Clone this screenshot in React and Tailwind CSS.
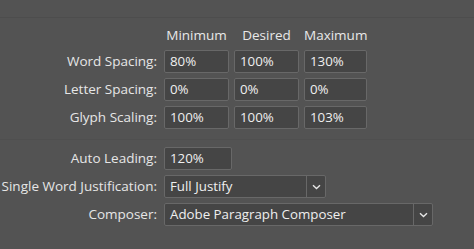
import React from 'react';

const font = { fontFamily: '"Open Sans", "Liberation Sans", sans-serif' };

const Field = ({ value, width = 'w-[65px]', height = 'h-[23px]' }) => (
  <div
    className={`${width} ${height} flex items-center rounded-[2px] border border-[#686868] bg-[#454545] pl-[5px] text-[13.3px] text-[#efefef]`}
  >
    {value}
  </div>
);

const Chevron = () => (
  <svg width="9" height="6" viewBox="0 0 9 6" fill="none">
    <path d="M1 1.2L4.5 4.5L8 1.2" stroke="#e6e6e6" strokeWidth="1.4" />
  </svg>
);

const Select = ({ value, width }) => (
  <div
    className={`${width} h-[23px] flex rounded-[2px] border border-[#686868] bg-[#454545] text-[13.3px] text-[#efefef]`}
  >
    <div className="flex-1 flex items-center pl-[5px]">{value}</div>
    <div className="w-[19px] flex items-center justify-center border-l border-[#686868]">
      <Chevron />
    </div>
  </div>
);

const Row = ({ label, children }) => (
  <div className="flex items-center">
    <div className="w-[157px] text-right text-[13.5px] whitespace-nowrap text-[#e6e6e6]">{label}</div>
    <div className="ml-[7px] flex gap-[5px]">{children}</div>
  </div>
);

export default function App() {
  const rows = [
    ['Word Spacing:', '80%', '100%', '130%'],
    ['Letter Spacing:', '0%', '0%', '0%'],
    ['Glyph Scaling:', '100%', '100%', '103%'],
  ];

  return (
    <div className="w-[474px] h-[249px] bg-[#535353] overflow-hidden" style={font}>
      <div className="h-[18px] border-b border-[#4d4d4d]" />
      <div className="h-[32px] pt-[8px] flex">
        <div className="w-[164px]" />
        <div className="flex gap-[5px] text-[13.5px] leading-[18px] text-[#e8e8e8]">
          <div className="w-[65px] text-center">Minimum</div>
          <div className="w-[65px] text-center">Desired</div>
          <div className="w-[63px] text-center">Maximum</div>
        </div>
      </div>
      <div className="flex flex-col gap-[5px]">
        {rows.map(([label, min, des, max]) => (
          <Row key={label} label={label}>
            <Field value={min} />
            <Field value={des} />
            <Field value={max} width="w-[63px]" />
          </Row>
        ))}
      </div>
      <div className="mt-[10px] border-t border-[#4f4f4f]" />
      <div className="mt-[7px] flex flex-col gap-[5px]">
        <Row label="Auto Leading:">
          <Field value="120%" width="w-[68px]" height="h-[23px]" />
        </Row>
        <Row label="Single Word Justification:">
          <Select value="Full Justify" width="w-[162px]" />
        </Row>
        <Row label="Composer:">
          <Select value="Adobe Paragraph Composer" width="w-[269px]" />
        </Row>
      </div>
    </div>
  );
}
